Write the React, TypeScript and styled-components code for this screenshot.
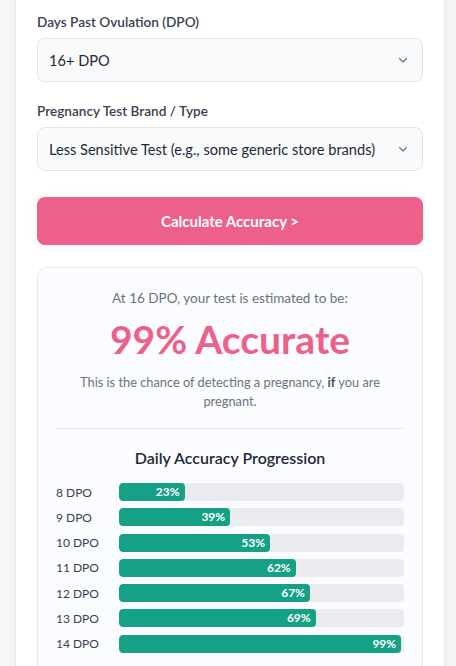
import React from "react";
import styled, { createGlobalStyle } from "styled-components";

const GlobalStyle = createGlobalStyle`
  html, body {
    margin: 0;
    padding: 0;
    background: #f6f6f7;
    font-family: "Segoe UI", Lato, "Noto Sans", sans-serif;
    color: #1f2937;
  }
  * { box-sizing: border-box; }
`;

const progression = [
  { day: 8, value: 23 },
  { day: 9, value: 39 },
  { day: 10, value: 53 },
  { day: 11, value: 62 },
  { day: 12, value: 67 },
  { day: 13, value: 69 },
  { day: 14, value: 99 },
];

const Chevron = () => (
  <svg width="12" height="12" viewBox="0 0 24 24" fill="none" stroke="#6b7280" strokeWidth="2.4" strokeLinecap="round" strokeLinejoin="round">
    <path d="M5 9l7 7 7-7" />
  </svg>
);

const App = () => {
  return (
    <>
      <GlobalStyle />
      <Page>
        <Card>
          <Field>
            <Label>Days Past Ovulation (DPO)</Label>
            <Select>
              <span>16+ DPO</span>
              <Chevron />
            </Select>
          </Field>
          <Field>
            <Label>Pregnancy Test Brand / Type</Label>
            <Select>
              <span>Less Sensitive Test (e.g., some generic store brands)</span>
              <Chevron />
            </Select>
          </Field>
          <Button>Calculate Accuracy &gt;</Button>

          <Result>
            <Intro>At 16 DPO, your test is estimated to be:</Intro>
            <Big>99% Accurate</Big>
            <Note>
              This is the chance of detecting a pregnancy, <b>if</b> you are pregnant.
            </Note>
            <Divider />
            <ChartTitle>Daily Accuracy Progression</ChartTitle>
            <Bars>
              {progression.map((p) => (
                <BarRow key={p.day}>
                  <DayLabel>{p.day} DPO</DayLabel>
                  <Track>
                    <Fill style={{ width: `${p.value}%` }}>{p.value}%</Fill>
                  </Track>
                </BarRow>
              ))}
            </Bars>
          </Result>
        </Card>
      </Page>
    </>
  );
};

export default App;

const Page = styled.div`
  padding: 0 11px 0 15px;
  min-height: 666px;
`;

const Card = styled.div`
  background: #ffffff;
  border: 1px solid #e8eaee;
  border-top: none;
  box-shadow: 0 0 8px rgba(0, 0, 0, 0.04);
  padding: 12px 21px 40px;
  min-height: 700px;
`;

const Field = styled.div`
  display: flex;
  flex-direction: column;
  gap: 6px;
  margin-bottom: 19px;

  & + & {
    margin-bottom: 0;
  }
`;

const Label = styled.label`
  font-size: 13.6px;
  line-height: 20px;
  font-weight: 600;
  color: #374151;
`;

const Select = styled.div`
  display: flex;
  align-items: center;
  justify-content: space-between;
  height: 44px;
  padding: 0 13px 0 11px;
  background: #f9fafb;
  border: 1px solid #e2e5e9;
  border-radius: 8px;
  font-size: 14.6px;
  color: #1f2937;
`;

const Button = styled.button`
  display: block;
  width: 100%;
  height: 48px;
  margin-top: 26px;
  border: none;
  border-radius: 8px;
  background: #ec608a;
  color: #ffffff;
  font-family: inherit;
  font-size: 15px;
  font-weight: 700;
  box-shadow: 0 2px 14px rgba(0, 0, 0, 0.04);
  cursor: pointer;
`;

const Result = styled.div`
  margin-top: 22px;
  background: #fbfcff;
  border: 1px solid #e5e8ed;
  border-radius: 10px;
  padding: 20px 18px 24px;
  text-align: center;
`;

const Intro = styled.p`
  margin: 0;
  font-size: 13.5px;
  line-height: 20px;
  color: #6b7280;
`;

const Big = styled.h2`
  margin: 8px 0 11px;
  font-size: 39px;
  line-height: 46px;
  font-weight: 700;
  color: #ec608a;
`;

const Note = styled.p`
  margin: 0;
  font-size: 12.8px;
  line-height: 19px;
  color: #6b7280;

  b {
    color: #4b5563;
  }
`;

const Divider = styled.hr`
  margin: 17px 0 18px;
  border: none;
  border-top: 1px solid #e5e7eb;
`;

const ChartTitle = styled.h3`
  margin: 0 0 14px;
  font-size: 16px;
  line-height: 22px;
  font-weight: 600;
  color: #1f2937;
`;

const Bars = styled.div`
  display: flex;
  flex-direction: column;
  gap: 7.3px;
`;

const BarRow = styled.div`
  display: flex;
  align-items: center;
`;

const DayLabel = styled.span`
  width: 63px;
  flex-shrink: 0;
  text-align: left;
  font-size: 12px;
  color: #374151;
`;

const Track = styled.div`
  flex: 1;
  height: 18px;
  background: #e9ebee;
  border-radius: 4px;
  overflow: hidden;
`;

const Fill = styled.div`
  height: 100%;
  background: #16a085;
  border-radius: 4px;
  color: #ffffff;
  font-size: 12px;
  font-weight: 700;
  line-height: 18px;
  text-align: right;
  padding-right: 5px;
`;
